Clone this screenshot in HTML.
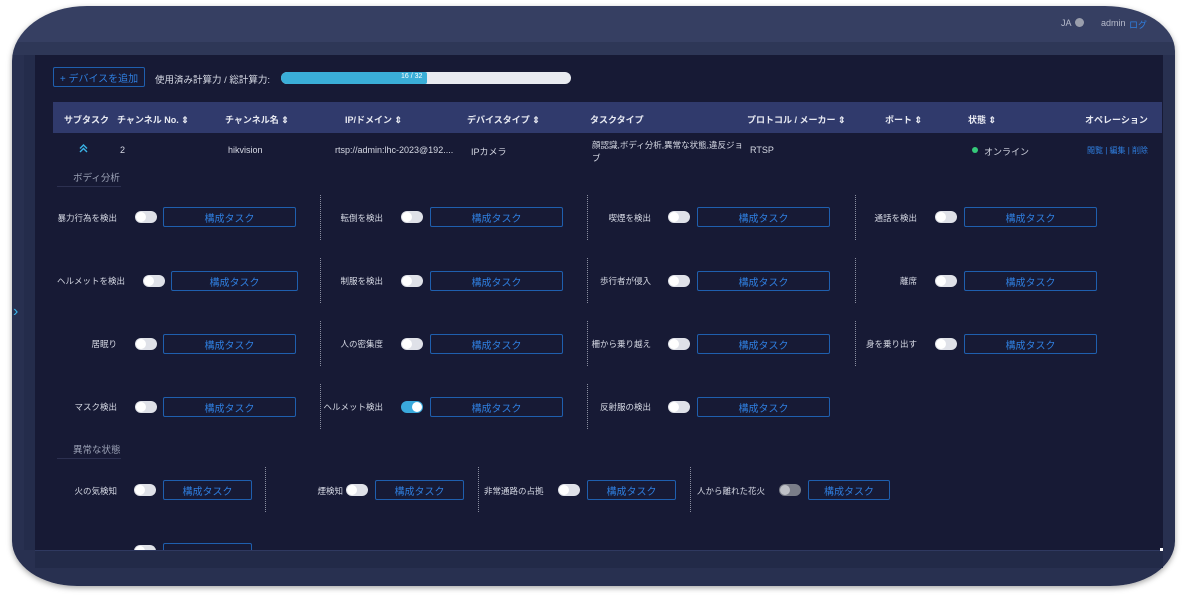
<!DOCTYPE html><html><head><meta charset="utf-8"><style>
*{margin:0;padding:0;box-sizing:border-box}
body{width:1200px;height:598px;background:#fff;position:relative;overflow:hidden;font-family:"Liberation Sans","Noto Sans CJK JP",sans-serif;font-size:9px;color:#d6d9e4}
.a{position:absolute;white-space:nowrap}
.frame{position:absolute;left:12px;top:6px;width:1163px;height:580px;background:linear-gradient(#363f62 0,#363f62 36px,#2e3757 36px,#2e3757 49px,#283050 49px);border-radius:75px 70px 65px 65px/55px 45px 45px 45px;box-shadow:0 2px 6px rgba(0,0,0,.35);overflow:hidden}
.panel{position:absolute;left:35px;top:55px;width:1128px;height:495px;background:#171a35}
.tg{position:absolute;width:22px;height:12px;border-radius:6px;background:#dfe1e8}
.tg:after{content:"";position:absolute;left:1px;top:1px;width:10px;height:10px;border-radius:5px;background:#fff}
.tg.on{background:#3aa9dc}.tg.on:after{left:11px}
.tg.off{background:#7a7d88}.tg.off:after{background:#bfc1c7}
.bt{position:absolute;height:20px;border:1px solid #1f5fae;border-radius:2px;color:#2f7fe0;display:flex;align-items:center;justify-content:center;font-size:10px}
.sp{position:absolute;width:0;height:45px;border-left:1px dotted #8a8ea0}
.lb{position:absolute;text-align:right;font-size:8.5px;color:#d6d9e4;white-space:nowrap}
.h{position:absolute;top:113px;font-weight:bold;font-size:9px;color:#e8eaf2;white-space:nowrap}
</style></head><body>
<div class="frame"></div>
<div class="a" style="left:24px;top:55px;width:29px;height:495px;background:#242c4b"></div>
<div class="panel"></div>
<div class="a" style="left:35px;top:550px;width:1128px;height:18px;background:#222a48;border-top:1px solid #2f3960"></div>
<div class="a" style="left:1160px;top:548px;width:3px;height:3px;background:#fff"></div>
<div class="a" style="left:13px;top:303px;color:#39b3e6;font-size:16px">›</div>
<div class="a" style="left:1061px;top:18px;color:#b8bccc">JA</div>
<div class="a" style="left:1075px;top:18px;width:9px;height:9px;border-radius:5px;background:#9a9eac"></div>
<div class="a" style="left:1101px;top:18px;color:#b8bccc">admin</div>
<div class="a" style="left:1129px;top:18px;color:#2f7fe0">ログ</div>
<div class="a" style="left:53px;top:67px;width:92px;height:20px;border:1px solid #1f5fae;border-radius:2px;color:#2f7fe0;font-size:10px;display:flex;align-items:center;justify-content:center">+ デバイスを追加</div>
<div class="a" style="left:155px;top:72px;font-size:9.5px">使用済み計算力 / 総計算力:</div>
<div class="a" style="left:281px;top:72px;width:290px;height:12px;border-radius:6px;background:#e8eaf0"></div>
<div class="a" style="left:281px;top:72px;width:146px;height:12px;border-radius:6px 2px 2px 6px;background:#3aaed8"></div>
<div class="a" style="left:401px;top:73px;font-size:7px;color:#fff">16 / 32</div>
<div class="a" style="left:53px;top:102px;width:1109px;height:31px;background:#303a6c"></div>
<div class="h" style="left:64px">サブタスク</div><div class="h" style="left:117px">チャンネル No. ⇕</div>
<div class="h" style="left:225px">チャンネル名 ⇕</div><div class="h" style="left:345px">IP/ドメイン ⇕</div>
<div class="h" style="left:467px">デバイスタイプ ⇕</div><div class="h" style="left:590px">タスクタイプ</div>
<div class="h" style="left:747px">プロトコル / メーカー ⇕</div><div class="h" style="left:885px">ポート ⇕</div>
<div class="h" style="left:968px">状態 ⇕</div><div class="h" style="left:1085px">オペレーション</div>
<svg class="a" style="left:79px;top:144px" width="9" height="9" viewBox="0 0 9 9"><path d="M1 4.5L4.5 1 8 4.5M1 8L4.5 4.5 8 8" fill="none" stroke="#39b3e6" stroke-width="1.4"/></svg>
<div class="a" style="left:120px;top:145px">2</div>
<div class="a" style="left:228px;top:145px">hikvision</div>
<div class="a" style="left:335px;top:145px">rtsp://admin:lhc-2023@192....</div>
<div class="a" style="left:471px;top:145px">IPカメラ</div>
<div class="a" style="left:592px;top:139px;line-height:13px;font-size:8.5px">顔認識,ボディ分析,異常な状態,違反ジョ<br>ブ</div>
<div class="a" style="left:750px;top:145px">RTSP</div>
<div class="a" style="left:972px;top:147px;width:6px;height:6px;border-radius:3px;background:#35c97a"></div>
<div class="a" style="left:984px;top:145px">オンライン</div>
<div class="a" style="left:1087px;top:145px;color:#2f7fe0;font-size:8px">閲覧 | 編集 | 削除</div>
<div class="a" style="left:73px;top:170px;color:#9aa0b4;font-size:9.5px">ボディ分析</div>
<div class="a" style="left:57px;top:186px;width:64px;height:1px;background:#2c3050"></div>
<div class="a" style="left:73px;top:442px;color:#9aa0b4;font-size:9.5px">異常な状態</div>
<div class="a" style="left:57px;top:458px;width:64px;height:1px;background:#2c3050"></div>

<div class="sp" style="left:320px;top:195px"></div><div class="sp" style="left:587px;top:195px"></div><div class="sp" style="left:855px;top:195px"></div>
<div class="sp" style="left:320px;top:258px"></div><div class="sp" style="left:587px;top:258px"></div><div class="sp" style="left:855px;top:258px"></div>
<div class="sp" style="left:320px;top:321px"></div><div class="sp" style="left:587px;top:321px"></div><div class="sp" style="left:855px;top:321px"></div>
<div class="sp" style="left:320px;top:384px"></div><div class="sp" style="left:587px;top:384px"></div>

<div class="lb" style="right:1083px;top:212px">暴力行為を検出</div><div class="tg" style="left:135px;top:211px"></div><div class="bt" style="left:163px;top:207px;width:133px">構成タスク</div>
<div class="lb" style="right:817px;top:212px">転倒を検出</div><div class="tg" style="left:401px;top:211px"></div><div class="bt" style="left:430px;top:207px;width:133px">構成タスク</div>
<div class="lb" style="right:549px;top:212px">喫煙を検出</div><div class="tg" style="left:668px;top:211px"></div><div class="bt" style="left:697px;top:207px;width:133px">構成タスク</div>
<div class="lb" style="right:283px;top:212px">通話を検出</div><div class="tg" style="left:935px;top:211px"></div><div class="bt" style="left:964px;top:207px;width:133px">構成タスク</div>

<div class="lb" style="right:1075px;top:275px">ヘルメットを検出</div><div class="tg" style="left:143px;top:275px"></div><div class="bt" style="left:171px;top:271px;width:127px">構成タスク</div>
<div class="lb" style="right:817px;top:275px">制服を検出</div><div class="tg" style="left:401px;top:275px"></div><div class="bt" style="left:430px;top:271px;width:133px">構成タスク</div>
<div class="lb" style="right:549px;top:275px">歩行者が侵入</div><div class="tg" style="left:668px;top:275px"></div><div class="bt" style="left:697px;top:271px;width:133px">構成タスク</div>
<div class="lb" style="right:283px;top:275px">離席</div><div class="tg" style="left:935px;top:275px"></div><div class="bt" style="left:964px;top:271px;width:133px">構成タスク</div>

<div class="lb" style="right:1083px;top:338px">居眠り</div><div class="tg" style="left:135px;top:338px"></div><div class="bt" style="left:163px;top:334px;width:133px">構成タスク</div>
<div class="lb" style="right:817px;top:338px">人の密集度</div><div class="tg" style="left:401px;top:338px"></div><div class="bt" style="left:430px;top:334px;width:133px">構成タスク</div>
<div class="lb" style="right:549px;top:338px">柵から乗り越え</div><div class="tg" style="left:668px;top:338px"></div><div class="bt" style="left:697px;top:334px;width:133px">構成タスク</div>
<div class="lb" style="right:283px;top:338px">身を乗り出す</div><div class="tg" style="left:935px;top:338px"></div><div class="bt" style="left:964px;top:334px;width:133px">構成タスク</div>

<div class="lb" style="right:1083px;top:401px">マスク検出</div><div class="tg" style="left:135px;top:401px"></div><div class="bt" style="left:163px;top:397px;width:133px">構成タスク</div>
<div class="lb" style="right:817px;top:401px">ヘルメット検出</div><div class="tg on" style="left:401px;top:401px"></div><div class="bt" style="left:430px;top:397px;width:133px">構成タスク</div>
<div class="lb" style="right:549px;top:401px">反射服の検出</div><div class="tg" style="left:668px;top:401px"></div><div class="bt" style="left:697px;top:397px;width:133px">構成タスク</div>

<div class="sp" style="left:265px;top:467px"></div><div class="sp" style="left:478px;top:467px"></div><div class="sp" style="left:690px;top:467px"></div>
<div class="lb" style="right:1083px;top:485px">火の気検知</div><div class="tg" style="left:134px;top:484px"></div><div class="bt" style="left:163px;top:480px;width:89px">構成タスク</div>
<div class="lb" style="right:857px;top:485px">煙検知</div><div class="tg" style="left:346px;top:484px"></div><div class="bt" style="left:375px;top:480px;width:89px">構成タスク</div>
<div class="lb" style="left:484px;top:485px">非常通路の占拠</div><div class="tg" style="left:558px;top:484px"></div><div class="bt" style="left:587px;top:480px;width:89px">構成タスク</div>
<div class="lb" style="left:697px;top:485px">人から離れた花火</div><div class="tg off" style="left:779px;top:484px"></div><div class="bt" style="left:808px;top:480px;width:82px">構成タスク</div>
<div class="a" style="left:53px;top:543px;width:1109px;height:7px;overflow:hidden"><div class="tg" style="left:81px;top:2px"></div><div class="bt" style="left:110px;top:0;width:89px"></div></div>
</body></html>
